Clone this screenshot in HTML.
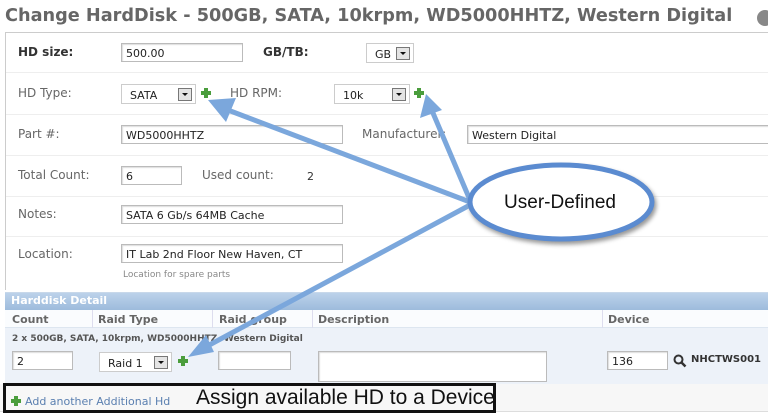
<!DOCTYPE html>
<html><head><meta charset="utf-8"><style>
*{box-sizing:border-box;margin:0;padding:0}
body{width:768px;height:416px;overflow:hidden;background:#fff;font-family:"DejaVu Sans",Verdana,sans-serif;font-size:11px;color:#666;position:relative}
.a{position:absolute;white-space:nowrap}
.in{position:absolute;border:1px solid #bbb;background:#fff;height:19px;font-size:11px;color:#222;padding:3px 4px;box-shadow:inset 1px 1px 1px #ddd}
.sel{position:absolute;border:1px solid #ccc;background:#fff;height:20px;font-size:11px;color:#222;padding:4px 8px}
.sel i{position:absolute;right:3px;top:3px;width:14px;height:13px;border:1px solid #777;background:#e4e4e4}
.sel i:after{content:"";position:absolute;left:3px;top:4px;border-left:3px solid transparent;border-right:3px solid transparent;border-top:3px solid #111}
.plus{position:absolute;width:10px;height:10px}
.plus:before{content:"";position:absolute;left:3px;top:0;width:4px;height:10px;background:#4a9d3c}
.plus:after{content:"";position:absolute;top:3px;left:0;width:10px;height:4px;background:#4a9d3c}
.hr{position:absolute;left:6px;right:0;height:1px;background:#eee}
.lb{font-size:12px;color:#666}
.b{font-weight:bold;color:#333}
</style></head><body>
<div class="a" style="left:5px;top:6px;font-size:17.7px;font-weight:bold;color:#666">Change HardDisk - 500GB, SATA, 10krpm, WD5000HHTZ, Western Digital</div>
<div class="a" style="left:757px;top:10px;width:16px;height:16px;border-radius:50%;background:#888"></div>
<div class="a" style="left:5px;top:32px;width:763px;height:1px;background:#ccc"></div>
<div class="a" style="left:5px;top:32px;width:1px;height:258px;background:#ccc"></div>
<div class="hr" style="top:72px"></div><div class="hr" style="top:114px"></div><div class="hr" style="top:155px"></div><div class="hr" style="top:196px"></div><div class="hr" style="top:236px"></div>

<div class="a lb b" style="left:18px;top:45px">HD size:</div>
<div class="in" style="left:121px;top:43px;width:122px">500.00</div>
<div class="a lb b" style="left:263px;top:45px">GB/TB:</div>
<div class="sel" style="left:366px;top:43px;width:48px">GB<i></i></div>

<div class="a lb" style="left:18px;top:86px">HD Type:</div>
<div class="sel" style="left:121px;top:84px;width:75px">SATA<i></i></div>
<div class="plus" style="left:201px;top:88px"></div>
<div class="a lb" style="left:230px;top:86px">HD RPM:</div>
<div class="sel" style="left:334px;top:84px;width:76px">10k<i></i></div>
<div class="plus" style="left:414px;top:88px"></div>

<div class="a lb" style="left:18px;top:127px">Part #:</div>
<div class="in" style="left:121px;top:125px;width:222px">WD5000HHTZ</div>
<div class="a lb" style="left:362px;top:127px">Manufacturer:</div>
<div class="in" style="left:467px;top:125px;width:305px">Western Digital</div>

<div class="a lb" style="left:18px;top:168px">Total Count:</div>
<div class="in" style="left:121px;top:166px;width:61px">6</div>
<div class="a lb" style="left:202px;top:168px">Used count:</div>
<div class="a" style="left:307px;top:170px;color:#333">2</div>

<div class="a lb" style="left:18px;top:207px">Notes:</div>
<div class="in" style="left:121px;top:205px;width:222px">SATA 6 Gb/s 64MB Cache</div>

<div class="a lb" style="left:18px;top:247px">Location:</div>
<div class="in" style="left:121px;top:244px;width:222px">IT Lab 2nd Floor New Haven, CT</div>
<div class="a" style="left:123px;top:270px;font-size:9px;color:#888">Location for spare parts</div>

<div class="a" style="left:5px;top:292px;width:763px;height:18px;background:linear-gradient(#bcd2ea,#9dbbdc);border-top:1px solid #c8d8ea"></div>
<div class="a" style="left:11px;top:294px;font-size:11px;font-weight:bold;color:#fff">Harddisk Detail</div>
<div class="a" style="left:5px;top:310px;width:763px;height:18px;background:#fafcfe;border-bottom:1px solid #dde6f0"></div>
<div class="a" style="left:92px;top:310px;width:1px;height:18px;background:#dde"></div>
<div class="a" style="left:212px;top:310px;width:1px;height:18px;background:#dde"></div>
<div class="a" style="left:312px;top:310px;width:1px;height:18px;background:#dde"></div>
<div class="a" style="left:602px;top:310px;width:1px;height:18px;background:#dde"></div>
<div class="a b" style="left:12px;top:313px;color:#666">Count</div>
<div class="a b" style="left:98px;top:313px;color:#666">Raid Type</div>
<div class="a b" style="left:219px;top:313px;color:#666">Raid group</div>
<div class="a b" style="left:318px;top:313px;color:#666">Description</div>
<div class="a b" style="left:608px;top:313px;color:#666">Device</div>
<div class="a" style="left:5px;top:328px;width:763px;height:56px;background:#edf2f9"></div>
<div class="a" style="left:12px;top:334px;font-size:9px;font-weight:bold;color:#555">2 x 500GB, SATA, 10krpm, WD5000HHTZ, Western Digital</div>
<div class="in" style="left:12px;top:351px;width:61px">2</div>
<div class="sel" style="left:99px;top:352px;width:73px">Raid 1<i></i></div>
<div class="plus" style="left:178px;top:356px"></div>
<div class="in" style="left:218px;top:351px;width:73px"></div>
<div class="in" style="left:318px;top:351px;width:229px;height:31px"></div>
<div class="in" style="left:607px;top:351px;width:61px">136</div>
<svg class="a" style="left:673px;top:354px" width="14" height="14"><circle cx="5.5" cy="5.5" r="4" fill="none" stroke="#333" stroke-width="2"/><line x1="8.5" y1="8.5" x2="12.5" y2="12.5" stroke="#333" stroke-width="2.5"/></svg>
<div class="a" style="left:691px;top:354px;font-size:10px;font-weight:bold;color:#333">NHCTWS001</div>
<div class="a" style="left:0;top:384px;width:768px;height:28px;background:#f7f7f7;border-bottom:1px solid #ddd"></div>
<div class="a" style="left:3px;top:383px;width:493px;height:30px;border:3px solid #111"></div>
<div class="plus" style="left:11px;top:396px"></div>
<div class="a" style="left:25px;top:395px;color:#5a7fb0">Add another Additional Hd</div>
<div class="a" style="left:196px;top:386px;font-family:'Liberation Sans',Arial,sans-serif;font-size:21px;color:#111">Assign available HD to a Device</div>

<svg class="a" style="left:0;top:0" width="768" height="416">
<g stroke="#7ba7dc" stroke-width="5" fill="none" stroke-linecap="round">
<line x1="470" y1="202" x2="220" y2="107"/>
<line x1="470" y1="200" x2="430" y2="106"/>
<line x1="470" y1="205" x2="200" y2="350"/>
</g>
<g fill="#7ba7dc">
<polygon points="208,100 236,98 226,122"/>
<polygon points="426,94 420,118 442,110"/>
<polygon points="188,357 206,335 214,352"/>
</g>
<ellipse cx="561" cy="202" rx="91" ry="37" fill="#fff" stroke="#5b8bd0" stroke-width="5" style="filter:drop-shadow(2px 3px 2px #999)"/>
<text x="560" y="208" text-anchor="middle" font-family="Liberation Sans,Arial,sans-serif" font-size="19" fill="#111">User-Defined</text>
</svg>
</body></html>
